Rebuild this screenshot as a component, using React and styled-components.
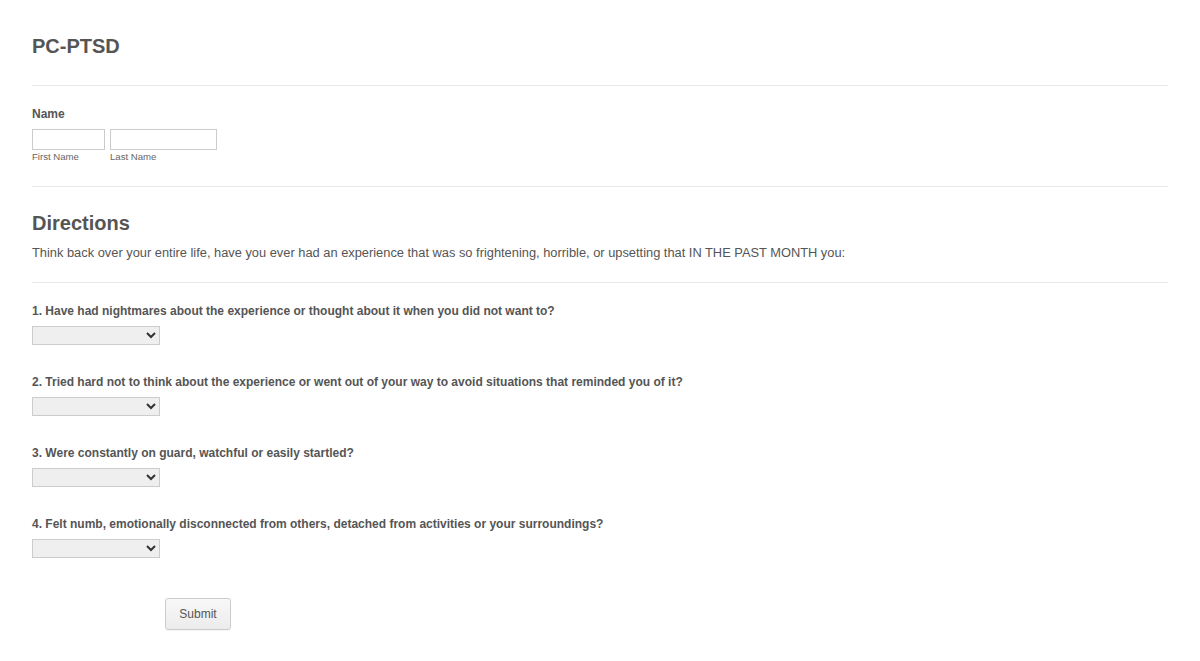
import React from "react";
import styled, { createGlobalStyle } from "styled-components";

const Global = createGlobalStyle`
  html, body { margin: 0; padding: 0; background: #fff; }
  body { font-family: "Liberation Sans", Arial, sans-serif; color: #555; }
`;

const Page = styled.form`
  padding: 32px 32px 30px 32px;
  display: flex;
  flex-direction: column;
`;

const Title = styled.h1`
  margin: 0;
  font-size: 20px;
  line-height: 28px;
  font-weight: bold;
  color: #555;
`;

const Divider = styled.hr`
  border: 0;
  border-top: 1px solid #e8e8e8;
  margin: ${(p) => p.$top || 0}px 0 ${(p) => p.$bottom || 0}px 0;
  height: 0;
`;

const FieldLabel = styled.label`
  display: block;
  font-size: 12px;
  line-height: 16px;
  font-weight: bold;
  color: #555;
`;

const NameRow = styled.div`
  display: flex;
  gap: 5px;
  margin-top: 7px;
`;

const NameCol = styled.div`
  display: flex;
  flex-direction: column;
`;

const TextInput = styled.input`
  box-sizing: border-box;
  width: ${(p) => p.$w}px;
  height: 21px;
  border: 1px solid #ccc;
  border-radius: 0;
  padding: 2px 4px;
  margin: 0;
  font-family: inherit;
  font-size: 12px;
  background: #fff;
`;

const SubLabel = styled.span`
  font-size: 9.6px;
  line-height: 12px;
  margin-top: 1px;
  color: #666;
`;

const Heading = styled.h2`
  margin: 0;
  font-size: 20px;
  line-height: 28px;
  font-weight: bold;
  color: #555;
`;

const Body = styled.p`
  margin: 8px 0 0 0;
  font-size: 12.85px;
  line-height: 16px;
  color: #555;
`;

const QuestionList = styled.div`
  display: flex;
  flex-direction: column;
  gap: 29px;
  margin-top: 20px;
`;

const Question = styled.div`
  display: flex;
  flex-direction: column;
  gap: 7px;
`;

const Select = styled.select`
  box-sizing: border-box;
  width: 128px;
  height: 19px;
  border: 1px solid #ccc;
  border-radius: 0;
  background: #efefef;
  font-family: inherit;
  font-size: 12px;
  color: #333;
  margin: 0;
  padding: 0 2px;
`;

const Actions = styled.div`
  display: flex;
  padding-left: 133px;
  margin-top: 40px;
`;

const Button = styled.button`
  box-sizing: border-box;
  width: 66px;
  height: 32px;
  border: 1px solid #ccc;
  border-radius: 3px;
  background: linear-gradient(#f8f8f8, #ececec);
  font-family: inherit;
  font-size: 12px;
  color: #555;
  cursor: pointer;
  box-shadow: 0 1px 1px rgba(0,0,0,0.05);
`;

const questions = [
  "1. Have had nightmares about the experience or thought about it when you did not want to?",
  "2. Tried hard not to think about the experience or went out of your way to avoid situations that reminded you of it?",
  "3. Were constantly on guard, watchful or easily startled?",
  "4. Felt numb, emotionally disconnected from others, detached from activities or your surroundings?",
];

export default function App() {
  return (
    <>
      <Global />
      <Page onSubmit={(e) => e.preventDefault()}>
        <Title>PC-PTSD</Title>
        <Divider $top={25} $bottom={20} />
        <FieldLabel>Name</FieldLabel>
        <NameRow>
          <NameCol>
            <TextInput $w={73} />
            <SubLabel>First Name</SubLabel>
          </NameCol>
          <NameCol>
            <TextInput $w={107} />
            <SubLabel>Last Name</SubLabel>
          </NameCol>
        </NameRow>
        <Divider $top={23} $bottom={22} />
        <Heading>Directions</Heading>
        <Body>
          Think back over your entire life, have you ever had an experience that was so frightening, horrible, or upsetting that IN THE PAST MONTH you:
        </Body>
        <Divider $top={21} $bottom={0} />
        <QuestionList>
          {questions.map((q) => (
            <Question key={q}>
              <FieldLabel>{q}</FieldLabel>
              <Select defaultValue="">
                <option value=""></option>
                <option value="yes">Yes</option>
                <option value="no">No</option>
              </Select>
            </Question>
          ))}
        </QuestionList>
        <Actions>
          <Button type="submit">Submit</Button>
        </Actions>
      </Page>
    </>
  );
}
